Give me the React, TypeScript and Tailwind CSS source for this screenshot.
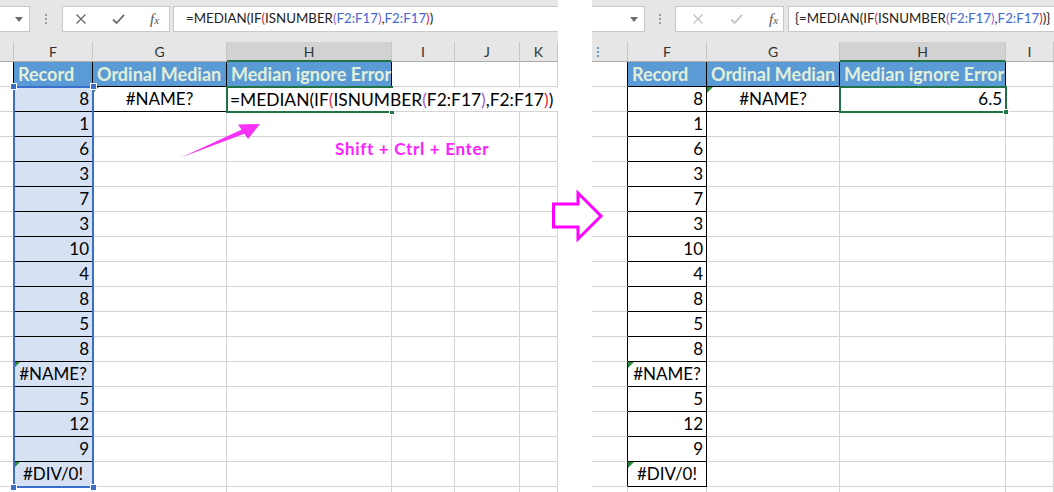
import React from "react";

type Cell = {
  text?: React.ReactNode;
  align?: "left" | "right" | "center";
  bg?: string;
  br?: string;
  bb?: string;
  bold?: boolean;
  header?: boolean;
  flag?: boolean;
};

const GRID = "border-[#d4d4d4]";

function XIcon({ color }: { color: string }) {
  return (
    <svg width="12" height="12" viewBox="0 0 12 12" className="shrink-0">
      <path d="M1.5 1.5 L10.5 10.5 M10.5 1.5 L1.5 10.5" stroke={color} strokeWidth="1.4" fill="none" />
    </svg>
  );
}
function CheckIcon({ color }: { color: string }) {
  return (
    <svg width="13" height="12" viewBox="0 0 13 12" className="shrink-0">
      <path d="M1 6.5 L4.6 10 L12 1.8" stroke={color} strokeWidth="1.8" fill="none" />
    </svg>
  );
}

function FormulaText({ braces }: { braces?: boolean }) {
  return (
    <span className="whitespace-nowrap text-[#222]">
      {braces ? "{" : ""}=MEDIAN(IF<span className="text-[#e0283c]">(</span>ISNUMBER
      <span className="text-[#a25ad6]">(</span>
      <span className="text-[#4168d6]">F2:F17</span>
      <span className="text-[#a25ad6]">)</span>,<span className="text-[#4168d6]">F2:F17</span>
      <span className="text-[#e0283c]">)</span>){braces ? "}" : ""}
    </span>
  );
}

function TopBar({ left }: { left: boolean }) {
  const iconColor = left ? "#6b6b6b" : "#c2c2c2";
  return (
    <div className="h-[42px] bg-[#e6e6e6] flex items-start pt-[6px]">
      <div
        className={`${left ? "w-[30px]" : "w-[53px]"} h-[26px] bg-white border border-l-0 border-[#c8c8c8] flex items-center justify-end pr-[6px]`}
      >
        <svg width="8" height="5" viewBox="0 0 8 5">
          <path d="M0 0 L8 0 L4 5 Z" fill="#6b6b6b" />
        </svg>
      </div>
      <div className={`${left ? "w-[32px]" : "w-[30px]"} h-[26px] flex items-center justify-center`}>
        <div className="flex flex-col gap-[2px]">
          <div className="w-[2px] h-[2px] bg-[#9a9a9a]" />
          <div className="w-[2px] h-[2px] bg-[#9a9a9a]" />
          <div className="w-[2px] h-[2px] bg-[#9a9a9a]" />
        </div>
      </div>
      <div
        className={`${left ? "w-[108px] pl-[12px] gap-[25px]" : "w-[109px] pl-[16px] gap-[26px]"} h-[26px] bg-white border border-[#c8c8c8] flex items-center`}
      >
        <XIcon color={iconColor} />
        <CheckIcon color={iconColor} />
        <span className="font-['Liberation_Serif',serif] italic text-[15px] leading-none text-[#555]">
          f<span className="text-[11px]">x</span>
        </span>
      </div>
      <div
        className={`flex-1 ${left ? "ml-[3px] pl-[12px]" : "ml-[4px] pl-[6px]"} h-[26px] bg-white border border-r-0 border-[#c8c8c8] flex items-center text-[13.3px] overflow-hidden`}
      >
        <FormulaText braces={!left} />
      </div>
    </div>
  );
}

function ColHeaders({ widths, labels, dotted }: { widths: string[]; labels: string[]; dotted?: boolean }) {
  return (
    <div className="h-[20px] flex bg-[#e6e6e6]">
      {widths.map((w, i) => {
        const sel = labels[i] === "H";
        return (
          <div
            key={i}
            className={`${w} shrink-0 h-[20px] border-r border-[#c6c6c6] flex items-center justify-center text-[14px] text-[#333] ${
              sel ? "bg-[#d2d2d2] border-b-2 border-b-[#217346]" : "border-b border-b-[#ababab]"
            } ${i === 0 && dotted ? "justify-start pl-[5px]" : ""}`}
          >
            {i === 0 && dotted ? (
              <div className="h-[10px] border-l-2 border-dotted border-[#5b9bd5]" />
            ) : (
              labels[i]
            )}
          </div>
        );
      })}
    </div>
  );
}

function Row({ widths, cells, short }: { widths: string[]; cells: Cell[]; short?: boolean }) {
  return (
    <div className="flex">
      {widths.map((w, i) => {
        const c = cells[i] || {};
        const al = c.align === "right" ? "justify-end pr-[3px]" : c.align === "center" ? "justify-center" : "justify-start pl-[4px]";
        return (
          <div
            key={i}
            className={`${w} shrink-0 ${short ? "h-[5px]" : "h-[25px]"} relative flex items-center ${al} border-r ${
              short ? "" : "border-b"
            } ${GRID} ${c.br || ""} ${c.bb || ""} ${c.bg || ""} ${
              c.header ? "font-bold text-[#e2efda] text-[18px]" : "text-black text-[17px]"
            } leading-[24px] whitespace-nowrap overflow-visible`}
          >
            {c.flag && (
              <div className="absolute left-0 top-0 w-0 h-0 border-t-[6px] border-t-[#2e8b3c] border-r-[6px] border-r-transparent" />
            )}
            {c.text}
          </div>
        );
      })}
    </div>
  );
}

const records = ["8", "1", "6", "3", "7", "3", "10", "4", "8", "5", "8", "#NAME?", "5", "12", "9", "#DIV/0!"];

function buildRows(left: boolean): Cell[][] {
  const rows: Cell[][] = [];
  const blackR = "border-r-black";
  const blackB = "border-b-black";
  const hdr: Cell[] = [];
  hdr[0] = { br: blackR };
  hdr[1] = { text: "Record", header: true, bg: "bg-[#5b9bd5]", br: blackR, bb: blackB };
  hdr[2] = { text: "Ordinal Median", header: true, bg: "bg-[#5b9bd5]", br: blackR, bb: blackB };
  hdr[3] = { text: "Median ignore Error", header: true, bg: "bg-[#5b9bd5]", br: blackR, bb: blackB };
  rows.push(hdr);
  records.forEach((r, idx) => {
    const isErr = r.startsWith("#");
    const row: Cell[] = [];
    row[0] = { br: blackR };
    row[1] = {
      text: r,
      align: isErr ? "center" : "right",
      br: blackR,
      bb: blackB,
      bg: left ? "bg-[#d6e2f4]" : "",
      flag: isErr,
    };
    if (idx === 0) {
      row[2] = { text: "#NAME?", align: "center", br: blackR, bb: blackB, flag: true };
      row[3] = left ? { br: blackR, bb: blackB } : { text: "6.5", align: "right", br: blackR, bb: blackB };
    }
    rows.push(row);
  });
  return rows;
}

function Sheet({ left }: { left: boolean }) {
  const widths = left
    ? ["w-[14px]", "w-[79px]", "w-[134px]", "w-[165px]", "w-[63px]", "w-[65px]", "w-[38px]"]
    : ["w-[36px]", "w-[79px]", "w-[133px]", "w-[166px]", "w-[48px]"];
  const labels = left ? ["", "F", "G", "H", "I", "J", "K"] : ["", "F", "G", "H", "I"];
  const rows = buildRows(left);
  return (
    <div className={`${left ? "w-[558px]" : "w-[462px]"} h-[492px] relative overflow-hidden bg-white font-['Lato','Noto_Sans',sans-serif]`}>
      <TopBar left={left} />
      <ColHeaders widths={widths} labels={labels} dotted={!left} />
      {rows.map((cells, i) => (
        <Row key={i} widths={widths} cells={cells} />
      ))}
      <Row widths={widths} cells={[]} short />

      {left ? (
        <>
          <div className="absolute left-[13px] top-[86px] w-[81px] h-[402px] border-2 border-[#3b6fcc] pointer-events-none" />
          <div className="absolute left-[10px] top-[83px] w-[7px] h-[7px] bg-[#3b6fcc] border border-white" />
          <div className="absolute left-[90px] top-[83px] w-[7px] h-[7px] bg-[#3b6fcc] border border-white" />
          <div className="absolute left-[10px] top-[484px] w-[7px] h-[7px] bg-[#3b6fcc] border border-white" />
          <div className="absolute left-[90px] top-[484px] w-[7px] h-[7px] bg-[#3b6fcc] border border-white" />
          <div className="absolute left-[226px] top-[86px] w-[167px] h-[27px] border-2 border-[#217346]" />
          <div className="absolute left-[389px] top-[109px] w-[6px] h-[6px] bg-[#217346] border border-white" />
          <div className="absolute left-[228px] top-[88px] w-[330px] h-[23px] bg-white flex items-center pl-[2px] text-[17.4px] leading-[23px] whitespace-nowrap">
            <span className="text-black">
              =MEDIAN(IF<span className="text-[#e0283c]">(</span>ISNUMBER<span className="text-[#a25ad6]">(</span>F2:F17
              <span className="text-[#a25ad6]">)</span>,F2:F17<span className="text-[#e0283c]">)</span>)
            </span>
          </div>
        </>
      ) : (
        <>
          <div className="absolute left-[247px] top-[86px] w-[168px] h-[27px] border-2 border-[#217346]" />
          <div className="absolute left-[411px] top-[109px] w-[6px] h-[6px] bg-[#217346] border border-white" />
        </>
      )}
    </div>
  );
}

export default function App() {
  return (
    <div className="w-[1054px] h-[492px] relative flex bg-white overflow-hidden">
      <Sheet left />
      <div className="w-[34px] shrink-0" />
      <Sheet left={false} />

      <svg className="absolute left-[170px] top-[115px]" width="100" height="50" viewBox="170 115 100 50">
        <path d="M181 157.5 L243 129 L245 133.5 Z" fill="#f532f5" />
        <path d="M260 124 L238 124.5 L248 139 Z" fill="#f532f5" />
      </svg>
      <div className="absolute left-[335px] top-[136px] text-[17px] tracking-[0.7px] font-bold text-[#ff21ff] font-['Lato','Noto_Sans',sans-serif] whitespace-nowrap">
        Shift + Ctrl + Enter
      </div>

      <svg className="absolute left-[548px] top-[188px]" width="60" height="56" viewBox="548 188 60 56">
        <path d="M553.5 204 L578 204 L578 193 L601 216 L578 239 L578 227 L553.5 227 Z" fill="white" stroke="#ff00ff" strokeWidth="3" />
      </svg>
    </div>
  );
}
